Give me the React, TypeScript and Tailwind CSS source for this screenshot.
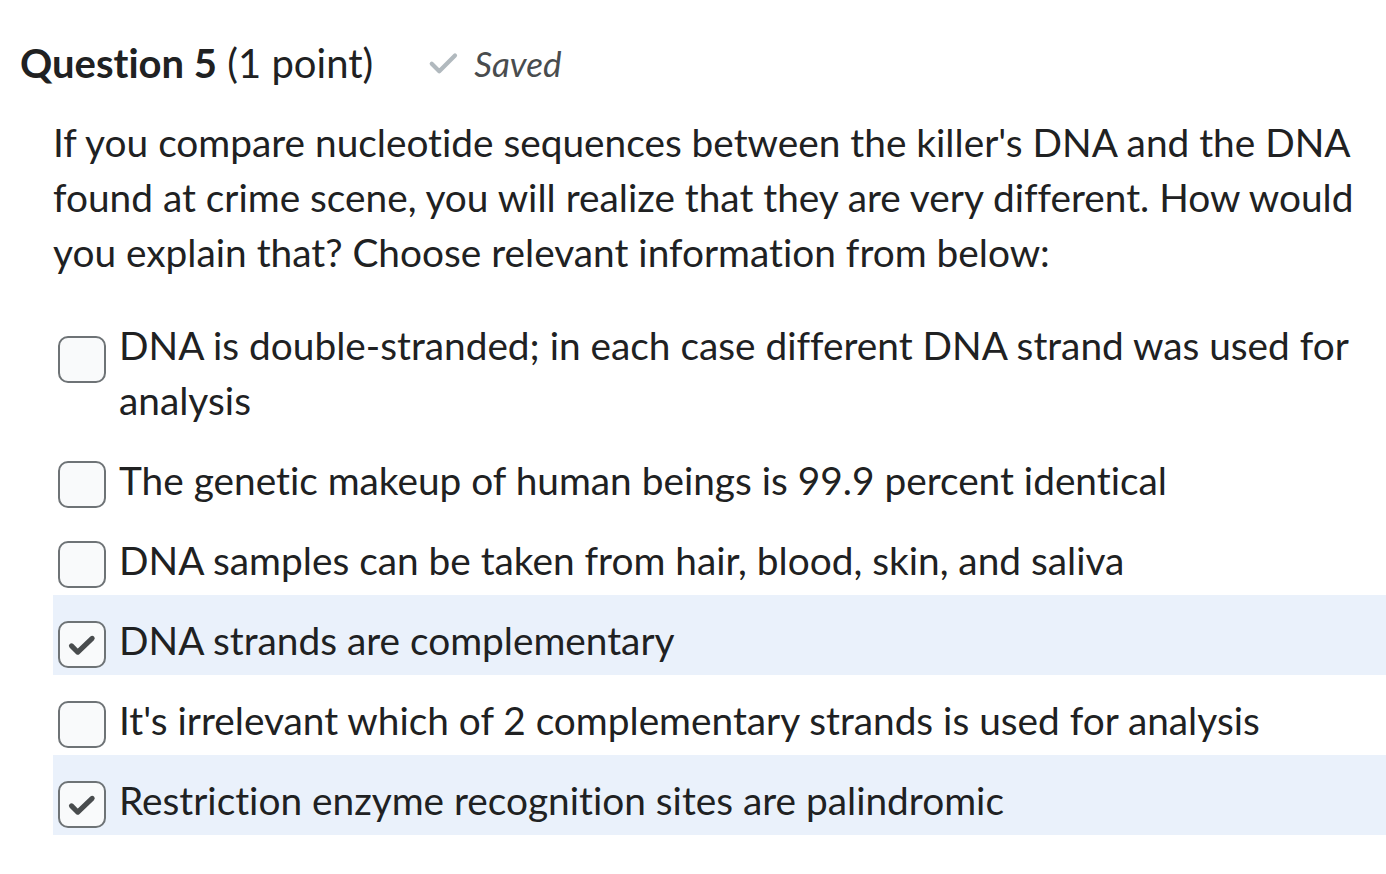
import React from 'react';

const options = [
  { text: 'DNA is double-stranded; in each case different DNA strand was used for analysis', checked: false },
  { text: 'The genetic makeup of human beings is 99.9 percent identical', checked: false },
  { text: 'DNA samples can be taken from hair, blood, skin, and saliva', checked: false },
  { text: 'DNA strands are complementary', checked: true },
  { text: "It's irrelevant which of 2 complementary strands is used for analysis", checked: false },
  { text: 'Restriction enzyme recognition sites are palindromic', checked: true },
];

function Checkbox({ checked, first }: { checked: boolean; first: boolean }) {
  return (
    <div
      className={`shrink-0 ml-[5px] w-[48px] h-[47px] rounded-[10px] border-2 border-[#6e7376] bg-[#f9fafb] flex items-center justify-center ${
        first ? 'mt-[18px]' : 'mt-[8px]'
      }`}
    >
      {checked && (
        <svg viewBox="0 0 24 24" className="w-[42px] h-[42px] shrink-0" fill="none">
          <path d="M6 12.5l3.6 3.6L17.8 8.2" stroke="#494c4e" strokeWidth="2.9" strokeLinecap="round" strokeLinejoin="round" />
        </svg>
      )}
    </div>
  );
}

export default function App() {
  return (
    <div className="min-h-screen bg-white text-[#202122] font-['Lato','Noto_Sans',sans-serif] [font-variant-ligatures:none]">
      {/* Header */}
      <div className="flex items-center pl-[20px] pt-[39px] h-[87px]">
        <h2 className="text-[40px] leading-[48px]">
          <span className="font-bold">Question 5</span> <span>(1 point)</span>
        </h2>
        <div className="flex items-center ml-[52px] text-[#494c4e]">
          <svg viewBox="0 0 24 24" className="w-[36px] h-[36px]" fill="none">
            <path d="M4.5 12.5l5 5L20 7" stroke="#b1b9be" strokeWidth="2.8" strokeLinecap="round" strokeLinejoin="round" />
          </svg>
          <span className="italic text-[35px] ml-[13px]">Saved</span>
        </div>
      </div>

      {/* Question */}
      <p className="pl-[53px] pr-[20px] mt-[28px] text-[38.8px] leading-[55px]">
        If you compare nucleotide sequences between the killer's DNA and the DNA found at crime scene, you will realize that they are very different. How would you explain that? Choose relevant information from below:
      </p>

      {/* Options */}
      <div className="ml-[53px] mt-[20px]">
        {options.map((o, i) => (
          <div
            key={i}
            className={`flex items-start pt-[18px] pb-[7px] ${o.checked ? 'bg-[#eaf1fb]' : ''}`}
          >
            <Checkbox checked={o.checked} first={i === 0} />
            <span className="pl-[13px] pr-[30px] text-[38.8px] leading-[55px]">{o.text}</span>
          </div>
        ))}
      </div>
    </div>
  );
}
